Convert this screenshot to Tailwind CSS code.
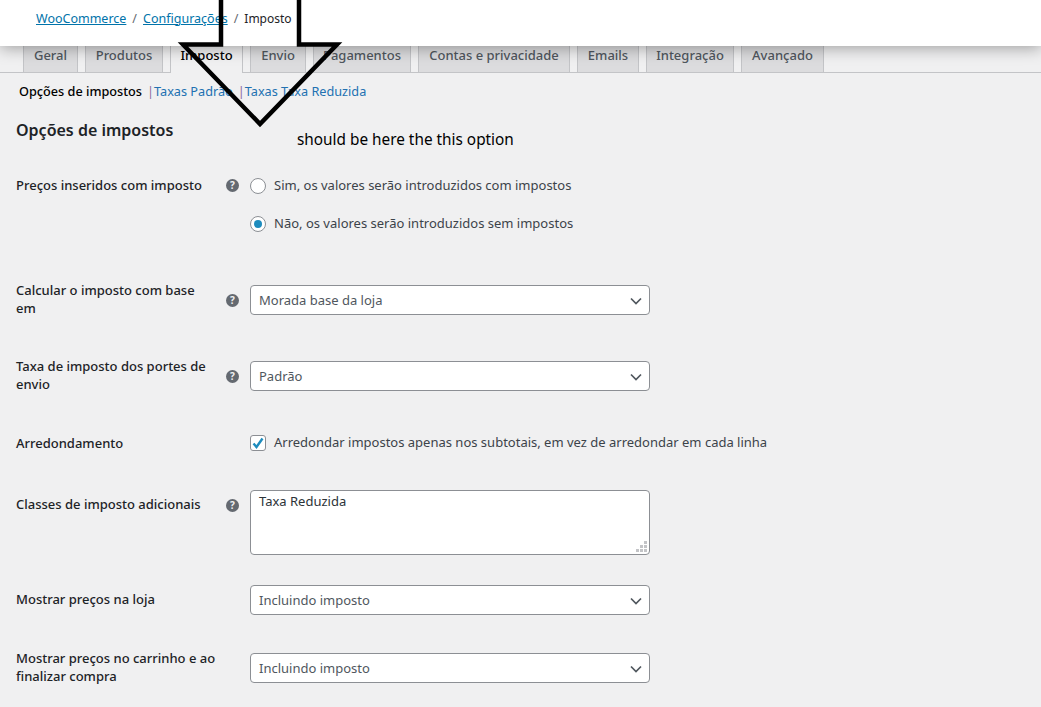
<!DOCTYPE html>
<html lang="pt">
<head>
    <meta charset="UTF-8">
    <title>Imposto - WooCommerce</title>
    <script src="https://cdn.jsdelivr.net/npm/@tailwindcss/browser@4"></script>
</head>
<body class="relative h-[707px] w-[1041px] overflow-hidden bg-[#f0f0f1] font-['Noto_Sans',sans-serif] text-[13px] text-[#3c434a]">
    <!-- barra do topo -->
    <div class="relative z-10 flex h-[46px] items-center bg-white pb-[8px] pl-[36px] text-[12.5px] shadow-[0_2px_16px_rgba(0,0,0,0.35)]">
        <a href="#" class="text-[#0073aa] underline">WooCommerce</a>
        <span class="mx-[6px] text-[#646970]">/</span>
        <a href="#" class="text-[#0073aa] underline">Configurações</a>
        <span class="mx-[6px] text-[#646970]">/</span>
        <span class="text-[12px] text-[#1d2327]">Imposto</span>
    </div>

    <!-- abas -->
    <nav class="flex h-[27px] gap-[7px] border-b border-[#c3c4c7] pl-[23px] text-[13px] font-medium leading-[19px] text-[#50575e]">
        <a class="h-[26px] w-[55px] border-x border-[#c3c4c7] bg-[#dcdcde] text-center">Geral</a>
        <a class="h-[26px] w-[78px] border-x border-[#c3c4c7] bg-[#dcdcde] text-center">Produtos</a>
        <a class="h-[27px] w-[73px] border-x border-[#c3c4c7] bg-[#f0f0f1] text-center text-black">Imposto</a>
        <a class="h-[26px] w-[56px] border-x border-[#c3c4c7] bg-[#dcdcde] text-center">Envio</a>
        <a class="h-[26px] w-[98px] border-x border-[#c3c4c7] bg-[#dcdcde] text-center">Pagamentos</a>
        <a class="h-[26px] w-[152px] border-x border-[#c3c4c7] bg-[#dcdcde] text-center">Contas e privacidade</a>
        <a class="h-[26px] w-[62px] border-x border-[#c3c4c7] bg-[#dcdcde] text-center">Emails</a>
        <a class="h-[26px] w-[88px] border-x border-[#c3c4c7] bg-[#dcdcde] text-center">Integração</a>
        <a class="h-[26px] w-[83px] border-x border-[#c3c4c7] bg-[#dcdcde] text-center">Avançado</a>
    </nav>

    <!-- sub navegação -->
    <div class="mt-[9px] flex h-[18px] items-center pl-[19px] text-[12.7px] leading-[18px]">
        <span class="font-medium text-black">Opções de impostos</span>
        <span class="ml-[5px] text-[#8c6b9c]">|</span>
        <a href="#" class="text-[#2271b1]">Taxas Padrão</a>
        <span class="ml-[5px] text-[#8c6b9c]">|</span>
        <a href="#" class="text-[#2271b1]">Taxas Taxa Reduzida</a>
    </div>

    <main class="pl-[16px]">
        <h2 class="mt-[18px] h-[24px] text-[16px] font-semibold leading-[24px] text-[#1d2327]">Opções de impostos</h2>

        <!-- Preços inseridos -->
        <div class="mt-[34px] flex">
            <label class="mr-[15px] w-[195px] font-medium leading-[18px] text-[#1d2327]">Preços inseridos com imposto</label>
            <svg class="mr-[11px] mt-[3px] h-[13px] w-[13px]" viewBox="0 0 13 13"><circle cx="6.5" cy="6.5" r="6.5" fill="#646970"/><text x="6.5" y="10" text-anchor="middle" font-size="10" font-weight="700" fill="#f0f0f1">?</text></svg>
            <div class="flex flex-col gap-[19px] pt-[1px]">
                <div class="flex h-[18px] items-center gap-[8px]">
                    <span class="h-[16px] w-[16px] rounded-full border border-[#8c8f94] bg-white"></span>
                    <span>Sim, os valores serão introduzidos com impostos</span>
                </div>
                <div class="mt-px flex h-[18px] items-center gap-[8px]">
                    <span class="flex h-[16px] w-[16px] items-center justify-center rounded-full border border-[#8c8f94] bg-white">
                        <span class="h-[8px] w-[8px] rounded-full bg-[#1e8cbe]"></span>
                    </span>
                    <span>Não, os valores serão introduzidos sem impostos</span>
                </div>
            </div>
        </div>

        <!-- Calcular -->
        <div class="mt-[48px] flex items-center">
            <label class="mr-[15px] w-[195px] pb-[2px] font-medium leading-[18px] text-[#1d2327]">Calcular o imposto com base em</label>
            <svg class="mr-[11px] h-[13px] w-[13px]" viewBox="0 0 13 13"><circle cx="6.5" cy="6.5" r="6.5" fill="#646970"/><text x="6.5" y="10" text-anchor="middle" font-size="10" font-weight="700" fill="#f0f0f1">?</text></svg>
            <div class="flex h-[30px] w-[400px] items-center justify-between rounded-[4px] border border-[#8c8f94] bg-white pl-[8px] pr-[7px] pt-[2px] text-[#50575e]">
                <span>Morada base da loja</span>
                <svg class="h-[8px] w-[12px]" viewBox="0 0 12 8" fill="none"><path d="M1 1.5 6 6.5 11 1.5" stroke="#50575e" stroke-width="1.7"/></svg>
            </div>
        </div>

        <!-- Taxa portes -->
        <div class="mt-[38px] flex items-center">
            <label class="mr-[15px] w-[195px] pb-[2px] font-medium leading-[18px] text-[#1d2327]">Taxa de imposto dos portes de envio</label>
            <svg class="mr-[11px] h-[13px] w-[13px]" viewBox="0 0 13 13"><circle cx="6.5" cy="6.5" r="6.5" fill="#646970"/><text x="6.5" y="10" text-anchor="middle" font-size="10" font-weight="700" fill="#f0f0f1">?</text></svg>
            <div class="flex h-[30px] w-[400px] items-center justify-between rounded-[4px] border border-[#8c8f94] bg-white pl-[8px] pr-[7px] pt-[2px] text-[#50575e]">
                <span>Padrão</span>
                <svg class="h-[8px] w-[12px]" viewBox="0 0 12 8" fill="none"><path d="M1 1.5 6 6.5 11 1.5" stroke="#50575e" stroke-width="1.7"/></svg>
            </div>
        </div>

        <!-- Arredondamento -->
        <div class="mt-[39px] flex h-[18px] items-center">
            <label class="w-[234px] font-medium leading-[18px] text-[#1d2327]">Arredondamento</label>
            <div class="flex items-center gap-[8px]">
                <span class="flex h-[16px] w-[16px] items-center justify-center rounded-[3px] border border-[#8c8f94] bg-white">
                    <svg class="h-[12px] w-[12px]" viewBox="0 0 12 12" fill="none"><path d="M1.5 6.5 4.5 10 10.5 1.5" stroke="#1e8cbe" stroke-width="2.4"/></svg>
                </span>
                <span>Arredondar impostos apenas nos subtotais, em vez de arredondar em cada linha</span>
            </div>
        </div>

        <!-- Classes -->
        <div class="mt-[38px] flex">
            <label class="mr-[15px] w-[195px] pt-[5px] font-medium leading-[18px] text-[#1d2327]">Classes de imposto adicionais</label>
            <svg class="mr-[11px] mt-[9px] h-[13px] w-[13px]" viewBox="0 0 13 13"><circle cx="6.5" cy="6.5" r="6.5" fill="#646970"/><text x="6.5" y="10" text-anchor="middle" font-size="10" font-weight="700" fill="#f0f0f1">?</text></svg>
            <div class="relative h-[65px] w-[400px] rounded-[4px] border border-[#8c8f94] bg-white pl-[8px] pt-[1px] leading-[18px] text-[#2c3338]">
                Taxa Reduzida
                <svg class="absolute bottom-[1px] right-[1px] h-[12px] w-[12px]" viewBox="0 0 12 12" fill="#c3c4c7"><path d="M8 0h3v3H8zM4 4h3v3H4zM8 4h3v3H8zM0 8h3v3H0zM4 8h3v3H4zM8 8h3v3H8z"/></svg>
            </div>
        </div>

        <!-- Mostrar loja -->
        <div class="mt-[30px] flex items-center">
            <label class="w-[234px] pb-[2px] font-medium leading-[18px] text-[#1d2327]">Mostrar preços na loja</label>
            <div class="flex h-[30px] w-[400px] items-center justify-between rounded-[4px] border border-[#8c8f94] bg-white pl-[8px] pr-[7px] pt-[2px] text-[#50575e]">
                <span>Incluindo imposto</span>
                <svg class="h-[8px] w-[12px]" viewBox="0 0 12 8" fill="none"><path d="M1 1.5 6 6.5 11 1.5" stroke="#50575e" stroke-width="1.7"/></svg>
            </div>
        </div>

        <!-- Mostrar carrinho -->
        <div class="mt-[34px] flex items-center">
            <label class="w-[234px] pb-[2px] pr-[20px] font-medium leading-[18px] text-[#1d2327]">Mostrar preços no carrinho e ao finalizar compra</label>
            <div class="flex h-[30px] w-[400px] items-center justify-between rounded-[4px] border border-[#8c8f94] bg-white pl-[8px] pr-[7px] pt-[2px] text-[#50575e]">
                <span>Incluindo imposto</span>
                <svg class="h-[8px] w-[12px]" viewBox="0 0 12 8" fill="none"><path d="M1 1.5 6 6.5 11 1.5" stroke="#50575e" stroke-width="1.7"/></svg>
            </div>
        </div>
    </main>

    <!-- anotação por cima do print -->
    <svg class="absolute left-0 top-0 z-20 h-[140px] w-[360px]" viewBox="0 0 360 140" fill="none">
        <path d="M221 -5V44.5H183L260 124 337 44.5H299V-5" stroke="#000" stroke-width="4.5"/>
    </svg>
    <span class="absolute left-[297px] top-[128px] z-20 text-[15.35px] leading-[22px] text-black">should be here the this option</span>
</body>
</html>
